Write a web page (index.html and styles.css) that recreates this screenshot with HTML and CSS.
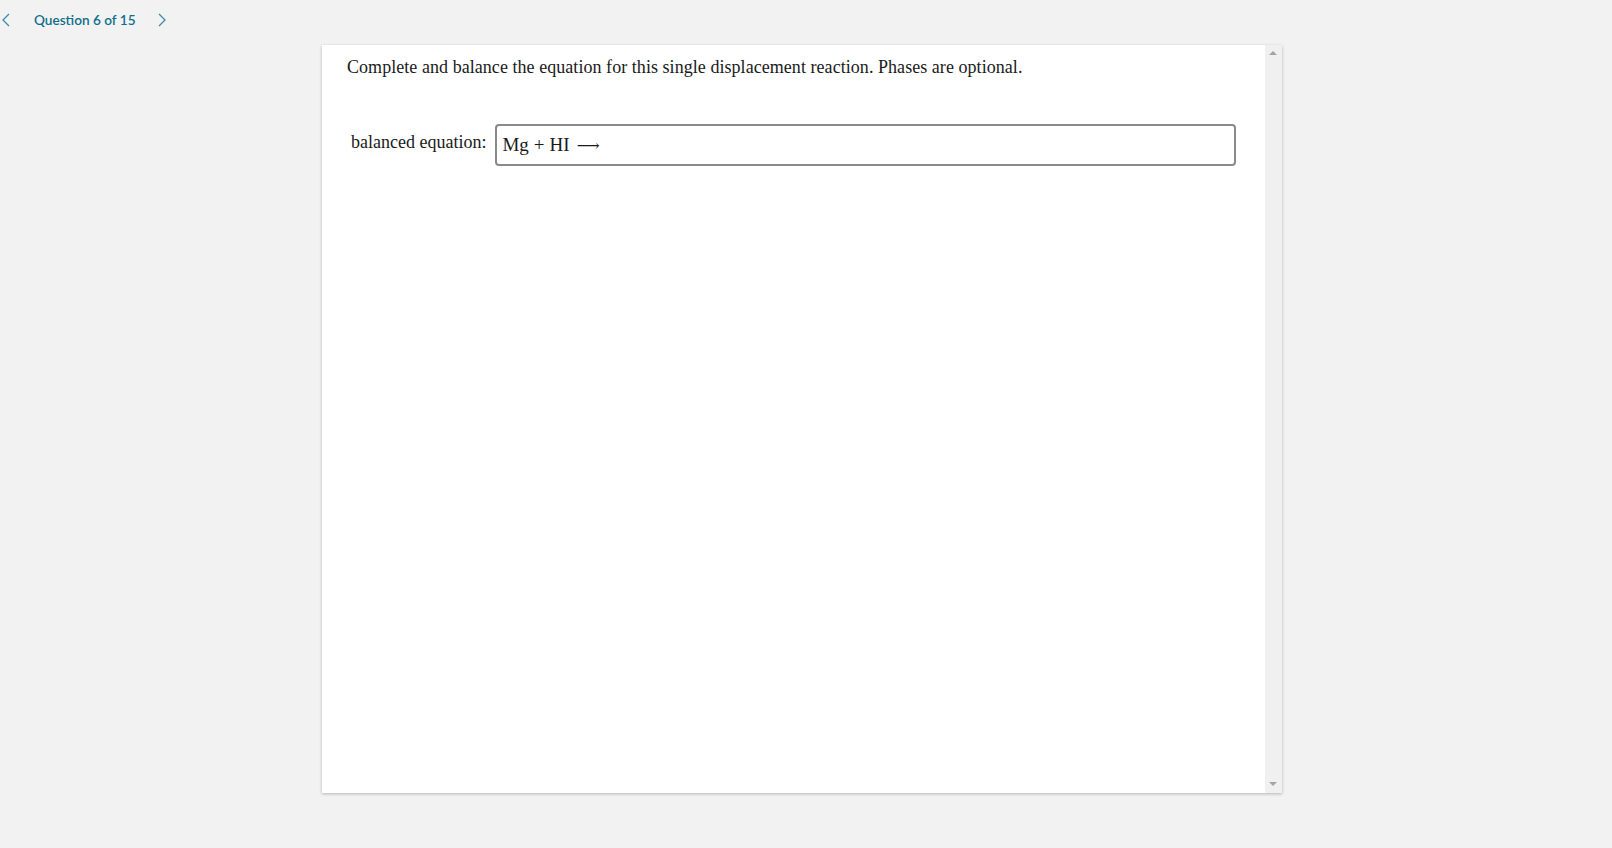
FILE: index.html
```html
<!DOCTYPE html>
<html lang="en">
<head>
  <meta charset="UTF-8">
  <meta name="viewport" content="width=device-width, initial-scale=1.0">
  <title>Question 6 of 15</title>
  <link rel="stylesheet" href="styles.css">
</head>
<body>
  <header class="question-nav">
    <button class="nav-arrow nav-prev" aria-label="Previous question">
      <svg width="8" height="14" viewBox="0 0 8 14"><polyline points="7,1 1,7 7,13" fill="none" stroke="#3b8cab" stroke-width="1.3"/></svg>
    </button>
    <span class="nav-title">Question 6 of 15</span>
    <button class="nav-arrow nav-next" aria-label="Next question">
      <svg width="8" height="14" viewBox="0 0 8 14"><polyline points="1,1 7,7 1,13" fill="none" stroke="#3b8cab" stroke-width="1.3"/></svg>
    </button>
  </header>

  <main class="question-area">
    <div class="question-card">
      <div class="question-body">
        <p class="question-text">Complete and balance the equation for this single displacement reaction. Phases are optional.</p>
        <div class="answer-row">
          <label class="answer-label" for="equation">balanced equation:</label>
          <div class="answer-box" id="equation">
            <span class="chem">Mg</span><span class="op">+</span><span class="chem">HI</span><span class="arrow">&#x27F6;</span>
          </div>
        </div>
      </div>
      <div class="scroll-track">
        <span class="scroll-up"></span>
        <span class="scroll-down"></span>
      </div>
    </div>
  </main>
</body>
</html>
```

FILE: styles.css
```css
:root {
  --page-bg: #f2f2f2;
  --card-bg: #ffffff;
  --nav-text: #0f6f8b;
  --text: #1a1a1a;
  --box-border: #8a8a8a;
  --track: #f0f0f0;
  --track-arrow: #a3a3a3;
}

* {
  margin: 0;
  padding: 0;
  box-sizing: border-box;
}

body {
  background-color: var(--page-bg);
  color: var(--text);
  width: 1612px;
  height: 848px;
  overflow: hidden;
}

.question-nav {
  display: flex;
  align-items: center;
  height: 40px;
  font-family: Lato, 'Open Sans', Arial, sans-serif;
}

.nav-arrow {
  display: flex;
  align-items: center;
  background: none;
  border: none;
  cursor: pointer;
}

.nav-prev {
  margin-left: 2px;
  margin-right: 24px;
}

.nav-next {
  margin-left: 22px;
}

.nav-title {
  color: var(--nav-text);
  font-size: 13.6px;
  font-weight: 600;
}

.question-area {
  padding-top: 5px;
  padding-left: 322px;
}

.question-card {
  display: flex;
  width: 960px;
  height: 748px;
  background-color: var(--card-bg);
  box-shadow: 0 1px 3px rgba(0, 0, 0, 0.25);
}

.question-body {
  flex: 1;
  padding: 11px 29px 0 25px;
  font-family: 'Liberation Serif', 'DejaVu Serif', serif;
}

.question-text {
  font-size: 18px;
  line-height: 22px;
  letter-spacing: 0.05px;
}

.answer-row {
  display: flex;
  align-items: center;
  margin-top: 46px;
  padding-left: 4px;
}

.answer-label {
  font-size: 18px;
  margin-right: 9px;
  margin-bottom: 5px;
}

.answer-box {
  flex: 1;
  display: flex;
  align-items: center;
  height: 42px;
  padding-left: 5px;
  border: 2px solid var(--box-border);
  border-radius: 4px;
  font-size: 19px;
}

.op {
  margin: 0 5px;
}

.arrow {
  margin-left: 7px;
  font-family: 'DejaVu Serif', serif;
  font-size: 16px;
}

.scroll-track {
  position: relative;
  width: 17px;
  background-color: var(--track);
}

.scroll-up,
.scroll-down {
  position: absolute;
  left: 4px;
  width: 0;
  height: 0;
  border-left: 4px solid transparent;
  border-right: 4px solid transparent;
}

.scroll-up {
  top: 6px;
  border-bottom: 4px solid var(--track-arrow);
}

.scroll-down {
  bottom: 7px;
  border-top: 4px solid var(--track-arrow);
}
```
